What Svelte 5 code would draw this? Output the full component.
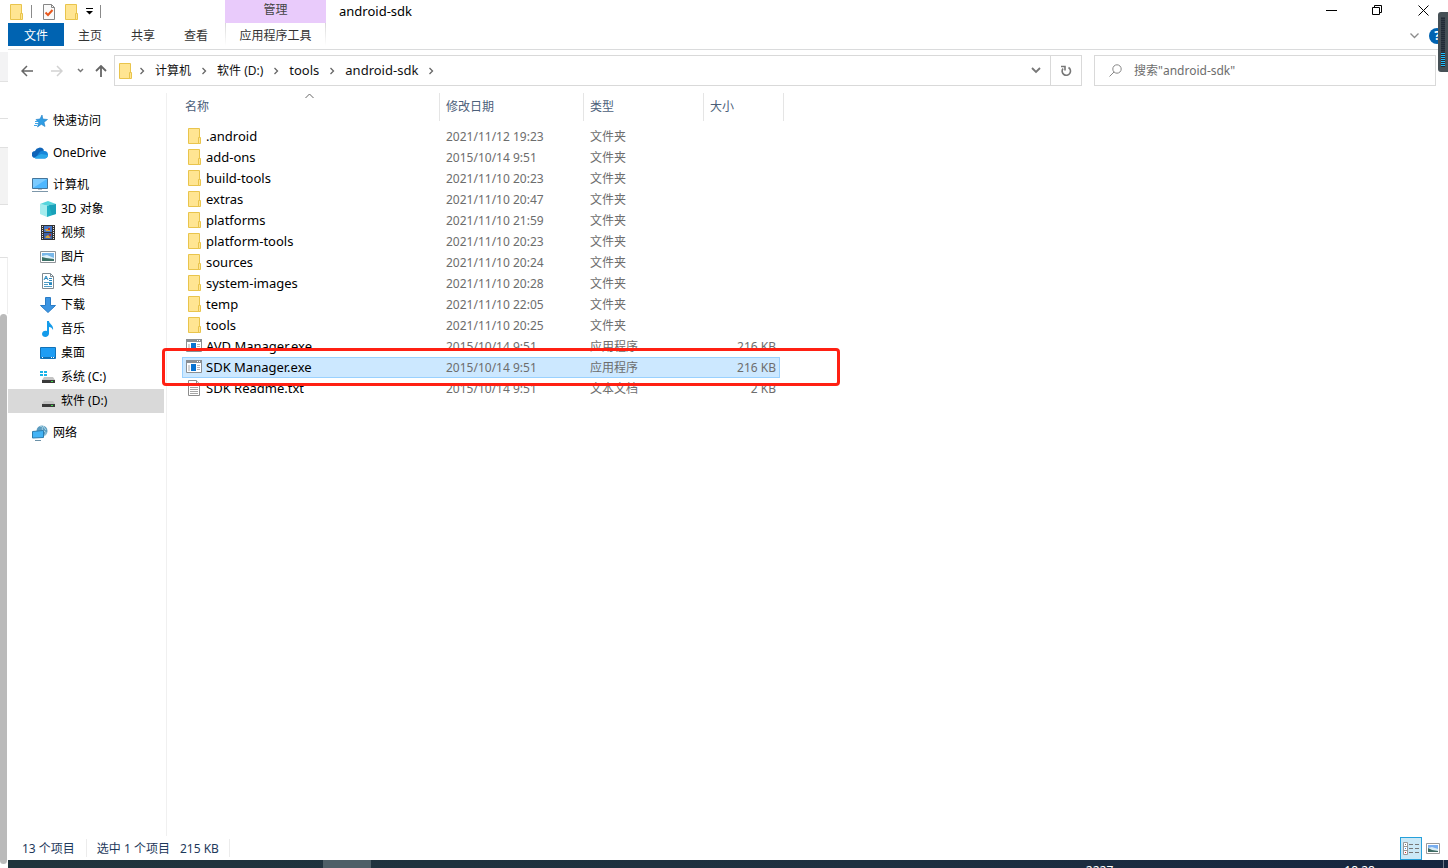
<script lang="ts">
	type Entry = {
		name: string;
		date: string;
		type: string;
		kind: 'folder' | 'exe' | 'txt';
		size?: string;
	};

	type Place = { label: string; icon: string; child?: boolean; gap?: boolean };

	const folder = (name: string, date: string): Entry => ({ name, date, type: '文件夹', kind: 'folder' });

	const entries: Entry[] = [
		folder('.android', '2021/11/12 19:23'),
		folder('add-ons', '2015/10/14 9:51'),
		folder('build-tools', '2021/11/10 20:23'),
		folder('extras', '2021/11/10 20:47'),
		folder('platforms', '2021/11/10 21:59'),
		folder('platform-tools', '2021/11/10 20:23'),
		folder('sources', '2021/11/10 20:24'),
		folder('system-images', '2021/11/10 20:28'),
		folder('temp', '2021/11/10 22:05'),
		folder('tools', '2021/11/10 20:25'),
		{ name: 'AVD Manager.exe', date: '2015/10/14 9:51', type: '应用程序', kind: 'exe', size: '216 KB' },
		{ name: 'SDK Manager.exe', date: '2015/10/14 9:51', type: '应用程序', kind: 'exe', size: '216 KB' },
		{ name: 'SDK Readme.txt', date: '2015/10/14 9:51', type: '文本文档', kind: 'txt', size: '2 KB' }
	];

	const places: Place[] = [
		{ label: '快速访问', icon: 'star' },
		{ label: 'OneDrive', icon: 'cloud', gap: true },
		{ label: '计算机', icon: 'computer', gap: true },
		{ label: '3D 对象', icon: 'cube', child: true },
		{ label: '视频', icon: 'video', child: true },
		{ label: '图片', icon: 'picture', child: true },
		{ label: '文档', icon: 'document', child: true },
		{ label: '下载', icon: 'download', child: true },
		{ label: '音乐', icon: 'music', child: true },
		{ label: '桌面', icon: 'desktop', child: true },
		{ label: '系统 (C:)', icon: 'system', child: true },
		{ label: '软件 (D:)', icon: 'drive', child: true },
		{ label: '网络', icon: 'network', gap: true }
	];

	const crumbs = [
		{ label: '计算机' },
		{ label: '软件 (D:)' },
		{ label: 'tools', latin: true },
		{ label: 'android-sdk', latin: true }
	];
	const tabs = ['主页', '共享', '查看'];

	let selected = $state('SDK Manager.exe');
	let currentPlace = $state('软件 (D:)');
	let query = $state('');
</script>

{#snippet folderIcon()}
	<svg width="14" height="16" viewBox="0 0 14 16" aria-hidden="true">
		<path d="M.5.5h11v15H.5z" fill="#ffe592" stroke="#e9c44c" />
		<path d="M10.5 9.5h2v6h-2z" fill="#ffe592" stroke="#e9c44c" />
	</svg>
{/snippet}

{#snippet fileIcon(kind: string)}
	{#if kind === 'folder'}
		{@render folderIcon()}
	{:else if kind === 'exe'}
		<svg width="18" height="14" viewBox="0 0 18 14" aria-hidden="true">
			<path d="M.5 1.5h15v11H.5z" fill="#fff" stroke="#8a8f93" />
			<path d="M0 0h16v3H0z" fill="#8a8f93" />
			<path d="M11 1h1v1h-1zM13 1h1v1h-1z" fill="#fff" />
			<path d="M2 5h2v6H2z" fill="#d5d5d5" />
			<path d="M5 4h5v7H5z" fill="#0873d1" />
			<path d="M11 5.5h3M11 7.5h3M11 9.5h3" stroke="#b5b5b5" />
		</svg>
	{:else}
		<svg width="14" height="16" viewBox="0 0 14 16" aria-hidden="true">
			<path d="M.5.5h8l3 3v12H.5z" fill="#fff" stroke="#8c8c8c" />
			<path d="M8.5.5v3h3" fill="#eee" stroke="#8c8c8c" />
			<path d="M2 5.5h8M2 7.5h8M2 9.5h8M2 11.5h8M2 13.5h8" stroke="#a5a5a5" />
		</svg>
	{/if}
{/snippet}

{#snippet placeIcon(icon: string)}
	<svg width="16" height="16" viewBox="0 0 16 16" aria-hidden="true">
		{#if icon === 'star'}
			<path d="M10 2l.8 4 4.7.5-3.5 2.7 1 4.3-3.7-2.2-3.8 2.7 1.2-4.5L4 6.5l4-.5z" fill="#2f9de4" stroke="#1c7cc4" stroke-width=".6" />
			<path d="M3 8.5h3M3 10.5h3M2 12.5h3" stroke="#3fa5e8" />
		{:else if icon === 'cloud'}
			<path d="M3.5 13A3.5 3.5 0 0 1 3 6a5 5 0 0 1 9-1l-5 8z" fill="#0f64b8" />
			<path d="M3 13.5l4-5.5a5 5 0 0 1 5.5-2 3.8 3.8 0 0 1 .5 7.5z" fill="#1686d9" />
			<path d="M2 12.8L9 9l6.5 1A2.8 2.8 0 0 1 13 13.5H4z" fill="#2aa7ea" />
		{:else if icon === 'computer'}
			<path d="M.5 1.5h15v10H.5z" fill="#4db7ff" stroke="#45759a" />
			<path d="M1 2h14L1 11z" fill="#7bcbff" />
			<path d="M6 12h4v1H6z" fill="#b6c0c8" />
			<path d="M0 14.5h16" stroke="#7d97aa" />
		{:else if icon === 'cube'}
			<path d="M0 3l7 1.5V16l-7-3z" fill="#a4ecee" />
			<path d="M7 4.5L16 3v10l-9 3z" fill="#1fb0c4" />
			<path d="M0 3l8-3 8 3-9 1.5z" fill="#56d5dc" />
			<path d="M9 4l7-1v10l-4 1z" fill="#1691ad" opacity=".5" />
		{:else if icon === 'video'}
			<path d="M1 0h14v15H1z" fill="#333" />
			<path d="M4 1h8v6H4z" fill="#4677c9" />
			<path d="M4 8h8v6H4z" fill="#3a62a8" />
			<path d="M5 4h3l2-2v4H6zM5 12l3-2 3 3H6z" fill="#d9a53a" />
			<path d="M8 3h2v2H8zM9 9h2v2H9z" fill="#b93329" />
			<path d="M2.5 1v14M13.5 1v14" stroke="#e8e8e8" stroke-dasharray="1 1" />
		{:else if icon === 'picture'}
			<path d="M.5 2.5h15v11H.5z" fill="#fff" stroke="#8f9499" />
			<path d="M2 4h12v8H2z" fill="#78b7e9" />
			<path d="M2 7l5-1 7 3v3H2z" fill="#dff1fb" />
			<path d="M2 8l4 1 8 1v2H2z" fill="#3d7268" />
		{:else if icon === 'document'}
			<path d="M2.5.5h8l3 3v12h-11z" fill="#fff" stroke="#7d8a92" />
			<path d="M10.5.5v3h3" fill="none" stroke="#7d8a92" />
			<path d="M4 7l2-4 2 4M5 5.5h2M9 5.5h3M9 7.5h3" fill="none" stroke="#2a8ac0" />
			<path d="M4 9.5h8M4 11.5h4M4 13.5h8" stroke="#4f9cc4" />
			<path d="M9 10h3v2H9z" fill="#2a8ac0" />
		{:else if icon === 'download'}
			<path d="M5.5.5h5v8h5L8 15.5.5 8.5h5z" fill="#3c95e2" stroke="#2a7cc6" />
		{:else if icon === 'music'}
			<path d="M7 0h2c0 3 5 4 4 9-1-2-2-3-4-3v6.5C9 17 2 17 2 13c0-3 3-4 5-3z" fill="#149bea" />
		{:else if icon === 'desktop'}
			<path d="M.5 2.5h15v11H.5z" fill="#1e9df4" stroke="#1272b7" />
			<path d="M1 12.5h14" stroke="#116eb0" />
			<path d="M2 12h1v1H2zM11 12h1v1h-1zM13 12h1v1h-1z" fill="#fff" />
		{:else if icon === 'system' || icon === 'drive'}
			{#if icon === 'system'}
				<path d="M0 2h3v2H0zM4 2h3v2H4zM0 5h3v2H0zM4 5h3v2H4z" fill="#19b3e8" />
			{/if}
			<path d="M4 8h9l2 3H2z" fill="#c4c4c4" />
			<path d="M2 11h13v3H2z" fill="#3a3a3a" />
			<path d="M11 12.5h2" stroke="#43e04b" />
		{:else}
			<circle cx="10" cy="6" r="5.5" fill="#5c9cc0" />
			<path d="M8 1c5 1 0 3 4 5s1 3 0 5M11 1l3 4" fill="none" stroke="#b4dcea" />
			<path d="M.5 6.5l11-1v7l-11 .5z" fill="#43b3f5" stroke="#2b7cae" />
			<path d="M3 15.5h6" stroke="#6b91a8" />
		{/if}
	</svg>
{/snippet}

{#snippet crumbArrow()}
	<svg class="crumb-arrow" width="6" height="8" viewBox="0 0 6 8" aria-hidden="true">
		<path d="M1.5 1l3 3-3 3" fill="none" stroke="#666" stroke-width="1.3" />
	</svg>
{/snippet}

<div class="screen">
	<div class="behind">
		<div class="behind-bar"></div>
		<div class="behind-line"></div>
		<div class="behind-block"></div>
		<div class="behind-page"></div>
		<div class="behind-scroll"></div>
	</div>

	<div class="front">
		<main class="explorer">
			<header class="ribbon">
				<div class="ribbon-left">
					<div class="quick-bar">
						{@render folderIcon()}
						<span class="bar-sep"></span>
						<button class="bare" aria-label="属性">
							<svg width="13" height="16" viewBox="0 0 13 16">
								<path d="M.5.5h8l3 3v12H.5z" fill="#fafafa" stroke="#868686" />
								<path d="M8.5.5v3h3" fill="none" stroke="#868686" />
								<path d="M2.5 8.5L5 11l4.5-5" fill="none" stroke="#e8571c" stroke-width="2" />
							</svg>
						</button>
						<button class="bare" aria-label="新建文件夹">{@render folderIcon()}</button>
						<button class="bare more" aria-label="自定义快速访问工具栏">
							<svg width="7" height="7" viewBox="0 0 7 7">
								<path d="M0 .5h7" stroke="#000" />
								<path d="M0 3h7L3.5 6.5z" />
							</svg>
						</button>
						<span class="bar-sep"></span>
					</div>
					<nav class="tabs">
						<button class="tab file-tab">文件</button>
						{#each tabs as tab}
							<button class="tab">{tab}</button>
						{/each}
					</nav>
				</div>
				<div class="context">
					<div class="context-title">管理</div>
					<button class="tab context-tab">应用程序工具</button>
				</div>
				<div class="ribbon-right">
					<div class="title-row">
						<h1>android-sdk</h1>
						<div class="window-buttons">
							<button class="bare" aria-label="最小化">
								<svg width="11" height="11" viewBox="0 0 11 11"><path d="M0 5.5h11" stroke="#000" /></svg>
							</button>
							<button class="bare" aria-label="还原">
								<svg width="11" height="11" viewBox="0 0 11 11" fill="none" stroke="#000">
									<path d="M.5 2.5h7v7h-7zM2.5 2.5v-2h7v7h-2" />
								</svg>
							</button>
							<button class="bare" aria-label="关闭">
								<svg width="11" height="11" viewBox="0 0 11 11"><path d="M.5.5l10 10M10.5.5l-10 10" stroke="#000" /></svg>
							</button>
						</div>
					</div>
					<div class="help-row">
						<button class="bare" aria-label="展开功能区">
							<svg width="9" height="6" viewBox="0 0 9 6"><path d="M.5.5l4 4 4-4" fill="none" stroke="#8c8c8c" stroke-width="1.3" /></svg>
						</button>
						<button class="help" aria-label="帮助">?</button>
					</div>
				</div>
			</header>

			<div class="address-row">
				<div class="nav-buttons">
					<button class="bare" aria-label="后退">
						<svg width="12" height="12" viewBox="0 0 12 12"><path d="M12 6H1M6 1L1 6l5 5" fill="none" stroke="#666" stroke-width="1.5" /></svg>
					</button>
					<button class="bare" aria-label="前进">
						<svg width="12" height="12" viewBox="0 0 12 12"><path d="M0 6h11M6 1l5 5-5 5" fill="none" stroke="#d2d2d2" stroke-width="1.5" /></svg>
					</button>
					<button class="bare recent" aria-label="最近位置">
						<svg width="7" height="5" viewBox="0 0 7 5"><path d="M1 1l2.5 2.5L6 1" fill="none" stroke="#777" stroke-width="1.5" /></svg>
					</button>
					<button class="bare" aria-label="上移">
						<svg width="12" height="12" viewBox="0 0 12 12"><path d="M6 12V1M1 6l5-5 5 5" fill="none" stroke="#666" stroke-width="1.8" /></svg>
					</button>
				</div>
				<div class="address">
					{@render folderIcon()}
					<div class="crumbs">
						{@render crumbArrow()}
						{#each crumbs as crumb}
							<a class="crumb" class:latin={crumb.latin} href="#top">{crumb.label}</a>
							{@render crumbArrow()}
						{/each}
					</div>
					<button class="bare history" aria-label="以前的位置">
						<svg width="10" height="7" viewBox="0 0 10 7"><path d="M1 1l4 4 4-4" fill="none" stroke="#777" stroke-width="1.8" /></svg>
					</button>
					<button class="refresh" aria-label="刷新">
						<svg width="12" height="12" viewBox="0 0 12 12" fill="none" stroke="#777" stroke-width="1.6">
							<path d="M8.5 2.5A4.2 4.2 0 1 1 3 3.5" />
							<path d="M1 1.5h4v4" />
						</svg>
					</button>
				</div>
				<label class="search">
					<svg width="13" height="13" viewBox="0 0 13 13" aria-hidden="true">
						<circle cx="8" cy="5" r="4.2" fill="none" stroke="#888" />
						<path d="M5 8L.5 12.5" stroke="#888" />
					</svg>
					<input type="text" aria-label="搜索" placeholder="搜索&quot;android-sdk&quot;" bind:value={query} />
				</label>
			</div>

			<div class="body">
				<nav class="places">
					{#each places as place}
						<button
							class="place"
							class:child={place.child}
							class:gap={place.gap}
							class:current={place.label === currentPlace}
							onclick={() => (currentPlace = place.label)}
						>
							{@render placeIcon(place.icon)}
							<span>{place.label}</span>
						</button>
					{/each}
				</nav>

				<section class="files">
					<table>
						<colgroup>
							<col class="col-name" />
							<col class="col-date" />
							<col class="col-type" />
							<col class="col-size" />
							<col class="col-gutter" />
						</colgroup>
						<thead>
							<tr>
								<th class="by-name">
									<button>名称</button>
									<svg class="sort" width="9" height="6" viewBox="0 0 9 6" aria-hidden="true">
										<path d="M.5 5l4-4 4 4" fill="none" stroke="#666" />
									</svg>
								</th>
								<th><button>修改日期</button></th>
								<th><button>类型</button></th>
								<th colspan="2"><button>大小</button></th>
							</tr>
						</thead>
						<tbody>
							{#each entries as entry}
								<tr class:selected={entry.name === selected} onclick={() => (selected = entry.name)}>
									<td>
										<div class="name">
											<span class="file-icon">{@render fileIcon(entry.kind)}</span>
											{entry.name}
										</div>
										{#if entry.name === 'SDK Manager.exe'}
											<span class="marker"></span>
										{/if}
									</td>
									<td>{entry.date}</td>
									<td>{entry.type}</td>
									<td class="size">{entry.size ?? ''}</td>
									<td class="gutter"></td>
								</tr>
							{/each}
						</tbody>
					</table>
				</section>
			</div>

			<footer class="status">
				<span class="count">13 个项目</span>
				<span class="picked">选中 1 个项目</span>
				<span class="total">215 KB</span>
				<div class="views">
					<button class="view active" aria-label="详细信息">
						<svg width="17" height="13" viewBox="0 0 17 13">
							<path d="M.5.5h4v12h-4zM.5 4.5h4M.5 8.5h4" fill="#fff" stroke="#999" />
							<path d="M2 2h1v1H2z" fill="#777" />
							<path d="M2 6h1v1H2z" fill="#3c8be0" />
							<path d="M2 10h1v1H2z" fill="#d22" />
							<path d="M6 2.5h4M12 2.5h4M6 6.5h4M12 6.5h4M6 10.5h4M12 10.5h4" stroke="#777" />
						</svg>
					</button>
					<button class="view" aria-label="大缩略图">
						<svg width="14" height="11" viewBox="0 0 14 11">
							<path d="M.5.5h13v10H.5z" fill="#fff" stroke="#999" />
							<path d="M2 2h10v7H2z" fill="#78aef0" />
							<path d="M2 5l4-1 6 2v3H2z" fill="#d7ebf4" />
							<path d="M2 5l4 2 6 1v1H2z" fill="#3d6a62" />
						</svg>
					</button>
				</div>
			</footer>
		</main>

		<div class="taskbar">
			<span class="task"></span>
			<span class="tray">2227</span>
			<time>18:28</time>
			<span class="peek"></span>
		</div>
	</div>

	<div class="meter"><span class="track"></span></div>
</div>

<style>
	:global(body) {
		margin: 0;
		background: #fff;
	}

	.screen {
		position: relative;
		display: flex;
		min-height: 100vh;
		overflow: hidden;
		font-family: 'Noto Sans', 'Noto Sans CJK SC', sans-serif;
		font-size: 12px;
		line-height: 16px;
		color: #000;
	}

	button,
	input {
		font: inherit;
		color: inherit;
	}

	button {
		padding: 0;
		border: 0;
		background: none;
	}

	svg {
		display: block;
		flex: none;
	}

	.bare {
		display: flex;
		align-items: center;
		justify-content: center;
	}

	/* the sliver of another window on the left */
	.behind {
		display: flex;
		flex-direction: column;
		flex: none;
		width: 8px;
	}

	.behind-bar {
		height: 29px;
		margin-top: 52px;
		border-bottom: 1px solid #e2e2e2;
		background: #f3f3f4;
	}

	.behind-line {
		height: 36px;
		border-bottom: 1px solid #e0e0e0;
	}

	.behind-block {
		height: 56px;
		margin-top: 28px;
		border-top: 1px solid #e0e0e0;
		border-bottom: 1px solid #e0e0e0;
		background: #f3f3f3;
	}

	.behind-page {
		height: 56px;
		margin-top: 52px;
		border-top: 1px solid #e0e0e0;
		border-right: 1px solid #eee;
	}

	.behind-scroll {
		flex: 1;
		width: 7px;
		margin-bottom: 4px;
		border-radius: 4px;
		background: #bababa;
	}

	.front {
		display: flex;
		flex: 1;
		flex-direction: column;
		min-width: 0;
	}

	.explorer {
		display: flex;
		flex: 1;
		flex-direction: column;
	}

	.ribbon {
		display: flex;
		height: 49px;
		border-bottom: 1px solid #dadbdc;
	}

	.ribbon-left {
		width: 217px;
	}

	.quick-bar {
		display: flex;
		align-items: center;
		gap: 9px;
		height: 23px;
		padding-left: 2px;
	}

	.bar-sep {
		width: 1px;
		height: 13px;
		margin: 0 2px 0 -2px;
		background: #8a8a8a;
	}

	.more {
		margin-left: -2px;
	}

	.tabs {
		display: flex;
		gap: 1px;
	}

	.tab {
		width: 52px;
		height: 23px;
		padding-top: 2px;
		color: #333;
	}

	.file-tab {
		width: 56px;
		margin-right: -1px;
		background: #0063b1;
		color: #fff;
	}

	.context {
		width: 101px;
	}

	.context-title {
		height: 23px;
		line-height: 20px;
		text-align: center;
		color: #444;
		background: #e9cbfb;
	}

	.context-tab {
		width: 100%;
		background:
			linear-gradient(#d8d8d8, #fff) left / 1px 100% no-repeat,
			linear-gradient(#d8d8d8, #fff) right / 1px 100% no-repeat;
	}

	.ribbon-right {
		flex: 1;
	}

	.title-row {
		display: flex;
		justify-content: space-between;
		height: 23px;
		padding-left: 13px;
	}

	h1 {
		margin: 0;
		font-size: 13px;
		font-weight: 400;
		line-height: 23px;
	}

	.window-buttons {
		display: flex;
		gap: 35px;
		height: 21px;
		padding-right: 19px;
	}

	.help-row {
		display: flex;
		align-items: center;
		justify-content: flex-end;
		gap: 10px;
		height: 26px;
		padding-right: 3px;
	}

	.help {
		width: 16px;
		height: 16px;
		border-radius: 8px;
		background: #0063b1;
		color: #fff;
		font-weight: 700;
		line-height: 16px;
	}

	.address-row {
		display: flex;
		padding: 5px 12px 0 13px;
	}

	.nav-buttons {
		display: flex;
		align-items: center;
		gap: 18px;
		width: 93px;
	}

	.recent {
		margin: 0 -7px 0 -4px;
	}

	.address {
		display: flex;
		flex: 1;
		align-items: center;
		height: 29px;
		padding-left: 4px;
		border: 1px solid #d9d9d9;
	}

	.crumbs {
		display: flex;
		align-items: center;
		gap: 10px;
		padding-left: 6px;
	}

	.crumb {
		color: #111;
		text-decoration: none;
		white-space: nowrap;
	}

	.crumb.latin {
		font-size: 13px;
		line-height: 18px;
		padding-bottom: 2px;
	}

	.history {
		width: 29px;
		height: 29px;
		margin-left: auto;
	}

	.refresh {
		display: flex;
		align-items: center;
		justify-content: center;
		width: 31px;
		height: 29px;
		border-left: 1px solid #d9d9d9;
	}

	.search {
		display: flex;
		align-items: center;
		gap: 12px;
		width: 326px;
		height: 29px;
		margin-left: 12px;
		padding-left: 14px;
		border: 1px solid #d9d9d9;
	}

	.search input {
		flex: 1;
		min-width: 0;
		padding: 0;
		border: 0;
		outline: 0;
		background: none;
	}

	.search input::placeholder {
		color: #6d6d6d;
		opacity: 1;
	}

	.body {
		display: flex;
		flex: 1;
		padding-top: 7px;
	}

	.places {
		width: 156px;
		padding: 16px 2px 0 0;
		border-right: 1px solid #f0f0f0;
	}

	.place {
		display: flex;
		align-items: center;
		gap: 5px;
		width: 156px;
		height: 24px;
		padding-left: 24px;
	}

	.place.child {
		padding-left: 32px;
	}

	.place.gap {
		margin-top: 8px;
	}

	.place.current {
		background: #d9d9d9;
	}

	.files {
		flex: 1;
		padding-left: 15px;
	}

	table {
		width: 602px;
		table-layout: fixed;
		border-collapse: separate;
		border-spacing: 0;
	}

	.col-name {
		width: 258px;
	}

	.col-date {
		width: 144px;
	}

	.col-type {
		width: 120px;
	}

	.col-size {
		width: 76px;
	}

	.col-gutter {
		width: 4px;
	}

	th {
		position: relative;
		padding: 0 0 5px;
		font-weight: 400;
		color: #4c607a;
	}

	th button {
		display: block;
		width: 100%;
		height: 28px;
		padding-left: 6px;
		border-right: 1px solid #e5e5e5;
		text-align: left;
	}

	.by-name button {
		padding-left: 3px;
	}

	.sort {
		position: absolute;
		top: 0;
		left: calc(50% - 6px);
	}

	td {
		position: relative;
		box-sizing: border-box;
		height: 21px;
		padding: 0 0 0 6px;
		border: solid transparent;
		border-width: 1px 0;
		color: #6d6d6d;
		white-space: nowrap;
	}

	.name {
		display: flex;
		align-items: center;
		gap: 2px;
		font-size: 13px;
		color: #000;
	}

	td:first-child {
		padding-bottom: 2px;
		padding-left: 3px;
		border-left-width: 1px;
	}

	.file-icon {
		display: flex;
		justify-content: center;
		width: 18px;
	}

	td.size {
		padding-right: 3px;
		border-right-width: 1px;
		text-align: right;
	}

	td.gutter {
		padding: 0;
	}

	.selected td:not(.gutter) {
		border-color: #99d1ff;
		background: #cce8ff;
	}

	/* red frame drawn over the highlighted row */
	.marker {
		position: absolute;
		z-index: 1;
		top: -10px;
		left: -21px;
		width: 672px;
		height: 32px;
		border: 3px solid #ff2013;
		border-radius: 4px;
		pointer-events: none;
	}

	.status {
		display: flex;
		align-items: center;
		height: 24px;
		padding-left: 14px;
		color: #1e395b;
	}

	.status span {
		padding-top: 2px;
	}

	.status .count {
		padding-right: 11px;
		border-right: 1px solid #ececec;
	}

	.status .picked {
		padding-left: 10px;
	}

	.status .total {
		padding-right: 10px;
		padding-left: 10px;
		border-right: 1px solid #ececec;
	}

	.views {
		display: flex;
		gap: 1px;
		margin-left: auto;
		padding-right: 5px;
	}

	.view {
		display: flex;
		align-items: center;
		justify-content: center;
		width: 20px;
		height: 23px;
	}

	.view.active {
		width: 22px;
		border: 1px solid #26a0da;
		background: #cbe8f6;
	}

	.taskbar {
		display: flex;
		height: 8px;
		overflow: hidden;
		background: linear-gradient(90deg, #20343c, #1e3040 60%, #16253f);
		color: #fff;
	}

	.task {
		width: 48px;
		margin-left: 315px;
		background: #4e5f67;
	}

	.tray {
		margin-left: auto;
		padding-top: 3px;
	}

	.taskbar time {
		margin-left: 231px;
		padding-top: 3px;
	}

	.peek {
		width: 4px;
		margin-left: 68px;
		border-left: 1px solid #6d7787;
	}

	.meter {
		position: absolute;
		top: 12px;
		right: 0;
		width: 10px;
		height: 60px;
		border-radius: 3px 0 0 3px;
		background: #465056;
	}

	.track {
		position: absolute;
		top: 5px;
		left: 3px;
		width: 4px;
		height: 50px;
		background:
			repeating-linear-gradient(transparent 0 1px, #222b35 1px 2px),
			linear-gradient(#333a45 35px, #22c0ff 35px);
	}
</style>
